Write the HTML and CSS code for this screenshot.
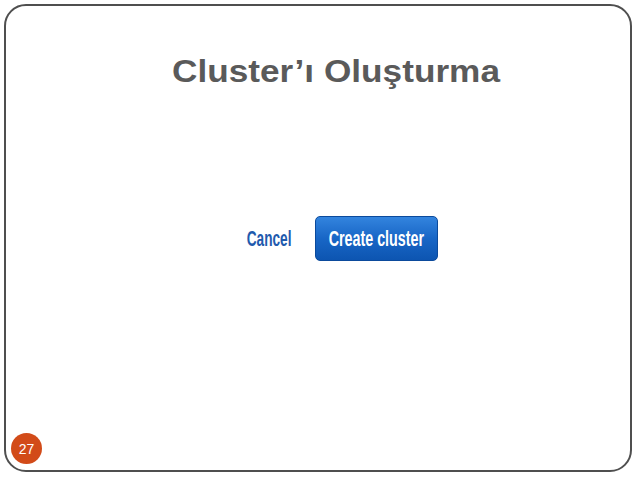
FILE: index.html
```html
<!DOCTYPE html>
<html>
<head>
<meta charset="utf-8">
<link rel="stylesheet" href="styles.css">
</head>
<body>
<div class="slide">
  <h1 class="title"><span class="title-text">Cluster’ı Oluşturma</span></h1>
  <div class="actions">
    <div class="cancel"><span class="squeeze">Cancel</span></div>
    <div class="create"><span class="squeeze">Create cluster</span></div>
  </div>
  <div class="page-num">27</div>
</div>
</body>
</html>
```
FILE: styles.css
```css
html, body {
  margin: 0;
  padding: 0;
  background: #ffffff;
}
body {
  width: 638px;
  height: 478px;
  overflow: hidden;
  font-family: "Liberation Sans", Arial, sans-serif;
}
.slide {
  box-sizing: border-box;
  width: 628px;
  height: 468px;
  margin: 4px 6px 6px 4px;
  border: 2px solid #4f4f4f;
  border-radius: 22px;
  display: flex;
  flex-direction: column;
}
.title {
  margin: 49px 0 0 0;
  padding-left: 166px;
  font-size: 32px;
  line-height: 32px;
  font-weight: bold;
  color: #5a5a5a;
  white-space: nowrap;
}
.title-text {
  display: inline-block;
  transform: scaleX(1.1);
  transform-origin: left center;
}
.actions {
  margin-top: 129px;
  padding-left: 241px;
  display: flex;
  align-items: center;
  gap: 23px;
}
.squeeze {
  display: inline-block;
  white-space: nowrap;
  font-weight: bold;
  font-size: 22px;
  line-height: 22px;
}
.cancel {
  width: 45px;
  display: flex;
  justify-content: center;
  color: #1f5aad;
}
.cancel .squeeze {
  transform: scaleX(0.62);
}
.create {
  box-sizing: border-box;
  width: 123px;
  height: 45px;
  border-radius: 5px;
  border: 1px solid #0b4a9c;
  background: linear-gradient(#3384de, #1866c6 50%, #0d55b1);
  color: #ffffff;
  display: flex;
  justify-content: center;
  align-items: center;
}
.create .squeeze {
  transform: scaleX(0.65);
}
.page-num {
  margin: auto 0 6px 5px;
  width: 31px;
  height: 31px;
  border-radius: 50%;
  background: #d24b19;
  color: #ffffff;
  font-size: 14px;
  display: flex;
  align-items: center;
  justify-content: center;
}
```
